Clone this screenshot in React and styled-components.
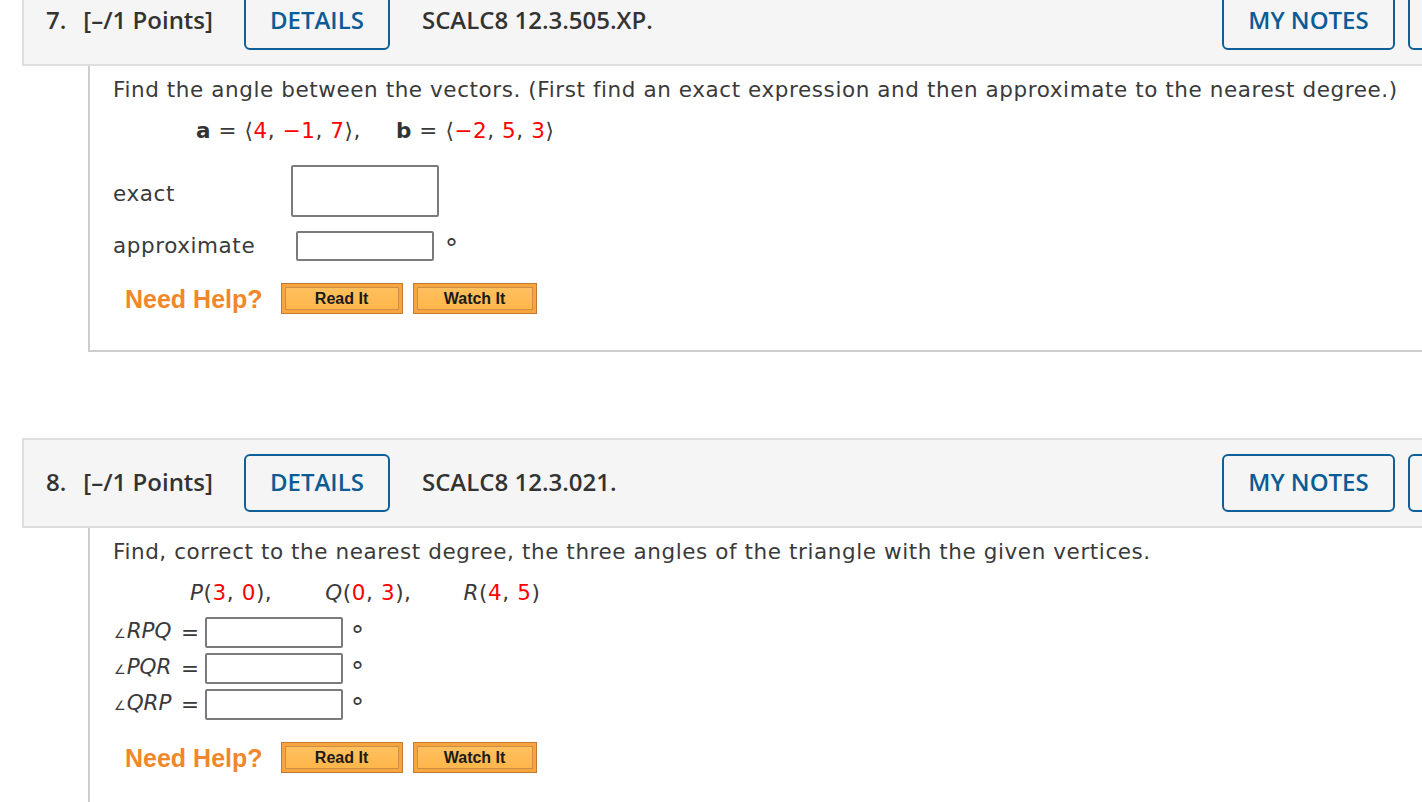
import React from "react";
import styled, { createGlobalStyle } from "styled-components";

const Global = createGlobalStyle`
  html, body { margin: 0; padding: 0; overflow: hidden; background: #fff; }
  body { font-family: "DejaVu Sans", Verdana, sans-serif; color: #3a3a3a; }
`;

const Page = styled.div`
  margin-top: -24px;
  padding-left: 22px;
  width: 1500px;
`;

const Question = styled.section`
  & + & { margin-top: 86px; }
`;

const Header = styled.div`
  display: flex;
  align-items: center;
  height: 86px;
  padding: 0 14px 0 22px;
  background: #f5f5f5;
  border: 2px solid #dedede;
  border-right: none;
  font-family: "Open Sans", sans-serif;
  font-weight: 600;
  font-size: 24px;
  color: #333;
`;

const HeadText = styled.span`
  margin-top: -3px;
  margin-left: ${(p) => p.$ml || 0}px;
  white-space: nowrap;
`;

const Num = styled.span`
  margin-right: 17px;
`;

const OutlineButton = styled.div`
  box-sizing: border-box;
  height: 58px;
  width: ${(p) => p.$w}px;
  margin-left: ${(p) => p.$ml || 0}px;
  display: flex;
  align-items: center;
  justify-content: center;
  padding-bottom: 3px;
  border: 2px solid #0f5f98;
  border-radius: 6px;
  color: #0b5c95;
  font-size: 24px;
  font-weight: 600;
`;

const Spacer = styled.div`
  flex: 1;
`;

const Content = styled.div`
  margin-left: 66px;
  border-left: 2px solid #cdcdcd;
  border-bottom: 2px solid #cdcdcd;
  padding: 12px 0 36px 23px;
  font-size: 21.5px;
  letter-spacing: 0.58px;
  line-height: 24px;
`;

const Prompt = styled.div`
  white-space: nowrap;
`;

const MathLine = styled.div`
  margin-top: 17px;
  padding-left: ${(p) => p.$indent}px;
  white-space: nowrap;
`;

const Red = styled.span`
  color: #f00;
`;

const Bold = styled.b`
  font-weight: 700;
  color: #333;
`;

const Var = styled.i`
  font-style: italic;
`;

const Gap = styled.span`
  display: inline-block;
  width: ${(p) => p.$w}px;
`;

const AnswerGrid = styled.div`
  margin-top: 22px;
  display: grid;
  grid-template-columns: 172px 160px auto;
  row-gap: 14px;
  align-items: center;
`;

const Label = styled.span`
  padding-top: ${(p) => p.$pt || 0}px;
`;

const Field = styled.div`
  box-sizing: border-box;
  width: ${(p) => p.$w}px;
  height: ${(p) => p.$h}px;
  border: 2px solid #7b7b7b;
  border-radius: 2px;
  background: #fff;
  justify-self: ${(p) => p.$justify || "center"};
`;

const Degree = styled.span`
  align-self: start;
  margin-top: ${(p) => p.$top}px;
  padding-left: ${(p) => p.$pl}px;
  font-size: 26px;
  line-height: 20px;
  letter-spacing: 0;
`;

const AngleGrid = styled.div`
  margin-top: 12px;
  display: grid;
  grid-template-columns: 68px 24px 138px auto;
  row-gap: 5px;
  align-items: center;
`;

const AngleName = styled.span`
  padding-left: 1px;
  font-style: italic;
  white-space: nowrap;
  letter-spacing: 0;
`;

const AngleSign = styled.span`
  font-style: normal;
  font-size: 13px;
  margin-right: 1px;
`;

const Equals = styled.span`
  justify-self: start;
  letter-spacing: 0;
`;

const HelpRow = styled.div`
  margin-top: 22px;
  display: flex;
  align-items: center;
  padding-left: 12px;
  letter-spacing: 0;
`;

const NeedHelp = styled.span`
  font-family: "Liberation Sans", Arial, sans-serif;
  font-weight: 700;
  font-size: 25px;
  color: #f0882a;
  margin-right: 18px;
`;

const HelpButton = styled.div`
  box-sizing: border-box;
  width: ${(p) => p.$w}px;
  height: 31px;
  margin-right: 10px;
  display: flex;
  align-items: center;
  justify-content: center;
  border: 1px solid #c27a30;
  background: linear-gradient(#ffc261, #ffb447);
  box-shadow: inset 0 0 0 3px #f8a53f, inset 0 0 0 4px #cc8d44;
  font-family: "Liberation Sans", Arial, sans-serif;
  font-weight: 700;
  font-size: 16px;
  color: #1a1a1a;
`;

function QuestionHeader({ num, code }) {
  return (
    <Header>
      <HeadText>
        <Num>{num}.</Num>[–/1 Points]
      </HeadText>
      <OutlineButton $w={146} $ml={31}>DETAILS</OutlineButton>
      <HeadText $ml={32}>{code}</HeadText>
      <Spacer />
      <OutlineButton $w={173}>MY NOTES</OutlineButton>
      <OutlineButton $w={100} $ml={13} />
    </Header>
  );
}

function Help() {
  return (
    <HelpRow>
      <NeedHelp>Need Help?</NeedHelp>
      <HelpButton $w={122}>Read It</HelpButton>
      <HelpButton $w={124}>Watch It</HelpButton>
    </HelpRow>
  );
}

function Angle({ name }) {
  return (
    <>
      <AngleName>
        <AngleSign>∠</AngleSign>
        {name}
      </AngleName>
      <Equals>=</Equals>
      <Field $w={138} $h={31} $justify="start" />
      <Degree $top={9} $pl={8}>°</Degree>
    </>
  );
}

export default function App() {
  return (
    <>
      <Global />
      <Page>
        <Question>
          <QuestionHeader num={7} code="SCALC8 12.3.505.XP." />
          <Content>
            <Prompt>
              Find the angle between the vectors. (First find an exact expression and then approximate to the nearest degree.)
            </Prompt>
            <MathLine $indent={83}>
              <Bold>a</Bold> = ⟨<Red>4</Red>, <Red>−1</Red>, <Red>7</Red>⟩,
              <Gap $w={35} />
              <Bold>b</Bold> = ⟨<Red>−2</Red>, <Red>5</Red>, <Red>3</Red>⟩
            </MathLine>
            <AnswerGrid>
              <Label $pt={6}>exact</Label>
              <Field $w={148} $h={52} />
              <span />
              <Label>approximate</Label>
              <Field $w={138} $h={30} />
              <Degree $top={8} $pl={0}>°</Degree>
            </AnswerGrid>
            <Help />
          </Content>
        </Question>
        <Question>
          <QuestionHeader num={8} code="SCALC8 12.3.021." />
          <Content>
            <Prompt>
              Find, correct to the nearest degree, the three angles of the triangle with the given vertices.
            </Prompt>
            <MathLine $indent={77}>
              <Var>P</Var>(<Red>3</Red>, <Red>0</Red>),
              <Gap $w={53} />
              <Var>Q</Var>(<Red>0</Red>, <Red>3</Red>),
              <Gap $w={52} />
              <Var>R</Var>(<Red>4</Red>, <Red>5</Red>)
            </MathLine>
            <AngleGrid>
              <Angle name="RPQ" />
              <Angle name="PQR" />
              <Angle name="QRP" />
            </AngleGrid>
            <Help />
          </Content>
        </Question>
      </Page>
    </>
  );
}
